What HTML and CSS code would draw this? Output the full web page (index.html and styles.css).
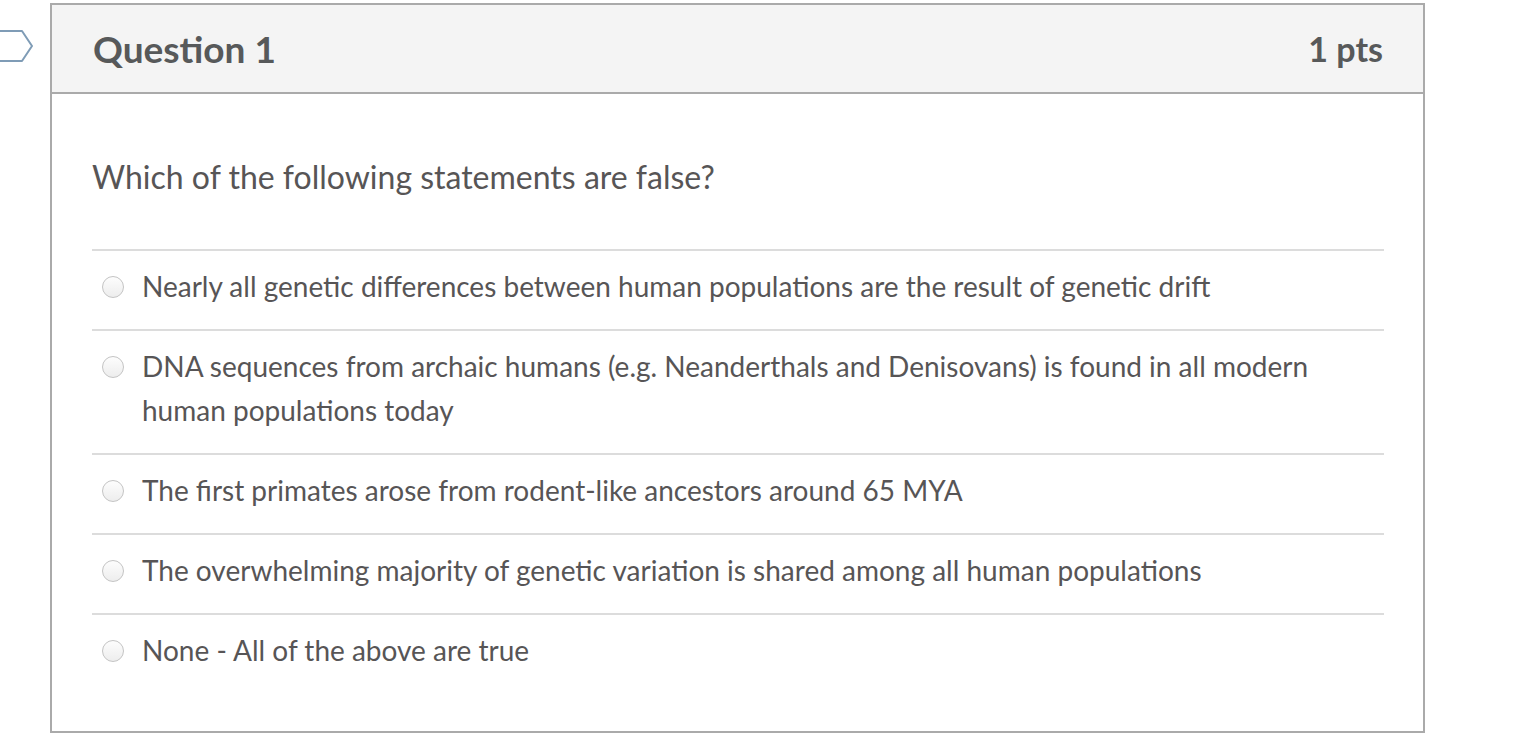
FILE: index.html
```html
<!DOCTYPE html>
<html>
<head>
<meta charset="utf-8">
<link rel="stylesheet" href="styles.css">
</head>
<body>
<div class="page">
  <div class="flag-col">
    <svg class="flag" width="34" height="34" viewBox="0 0 34 34">
      <path d="M-2 1 H22 L32 16 L22 31 H-2" fill="#fff" stroke="#7f9cb6" stroke-width="2" stroke-linejoin="round"/>
    </svg>
  </div>
  <div class="question">
    <div class="q-header">
      <span class="q-title">Question 1</span>
      <span class="q-pts">1 pts</span>
    </div>
    <div class="q-body">
      <div class="q-text">Which of the following statements are false?</div>
      <div class="answers">
        <div class="answer"><span class="radio"></span><span class="a-text">Nearly all genetic differences between human populations are the result of genetic drift</span></div>
        <div class="answer"><span class="radio"></span><span class="a-text">DNA sequences from archaic humans (e.g. Neanderthals and Denisovans) is found in all modern human populations today</span></div>
        <div class="answer"><span class="radio"></span><span class="a-text">The first primates arose from rodent-like ancestors around 65 MYA</span></div>
        <div class="answer"><span class="radio"></span><span class="a-text">The overwhelming majority of genetic variation is shared among all human populations</span></div>
        <div class="answer"><span class="radio"></span><span class="a-text">None - All of the above are true</span></div>
      </div>
    </div>
  </div>
</div>
</body>
</html>
```

FILE: styles.css
```css
html, body {
  margin: 0;
  padding: 0;
  background: #fff;
}
body {
  font-family: Lato, "Open Sans", sans-serif;
  color: #575556;
}
.page {
  display: flex;
  align-items: flex-start;
  padding-top: 3px;
}
.flag-col {
  width: 50px;
  flex: none;
  padding-top: 27px;
}
.flag {
  display: block;
}
.question {
  width: 1371px;
  border: 2px solid #aaaaaa;
  height: 726px;
  box-sizing: content-box;
}
.q-header {
  height: 87px;
  background: #f4f4f4;
  border-bottom: 2px solid #aaaaaa;
  display: flex;
  align-items: center;
  justify-content: space-between;
  padding: 0 40px 0 41px;
}
.q-title {
  font-size: 37px;
  font-weight: 700;
  color: #57595a;
}
.q-pts {
  font-size: 34px;
  font-weight: 700;
  color: #57595a;
}
.q-body {
  padding: 0 39px 0 40px;
}
.q-text {
  font-size: 32px;
  line-height: 44px;
  padding-top: 61px;
  padding-bottom: 50px;
}
.answer {
  display: flex;
  align-items: flex-start;
  border-top: 2px solid #dcdcdc;
  padding: 13px 0 21px 0;
}
.answer:last-child {
  padding-bottom: 0;
}
.radio {
  flex: none;
  width: 20px;
  height: 20px;
  border: 1px solid #c4c4c4;
  border-radius: 50%;
  background: linear-gradient(#fdfdfd, #ededed);
  margin: 12px 18px 0 10px;
}
.a-text {
  font-size: 28px;
  line-height: 44px;
}
```
